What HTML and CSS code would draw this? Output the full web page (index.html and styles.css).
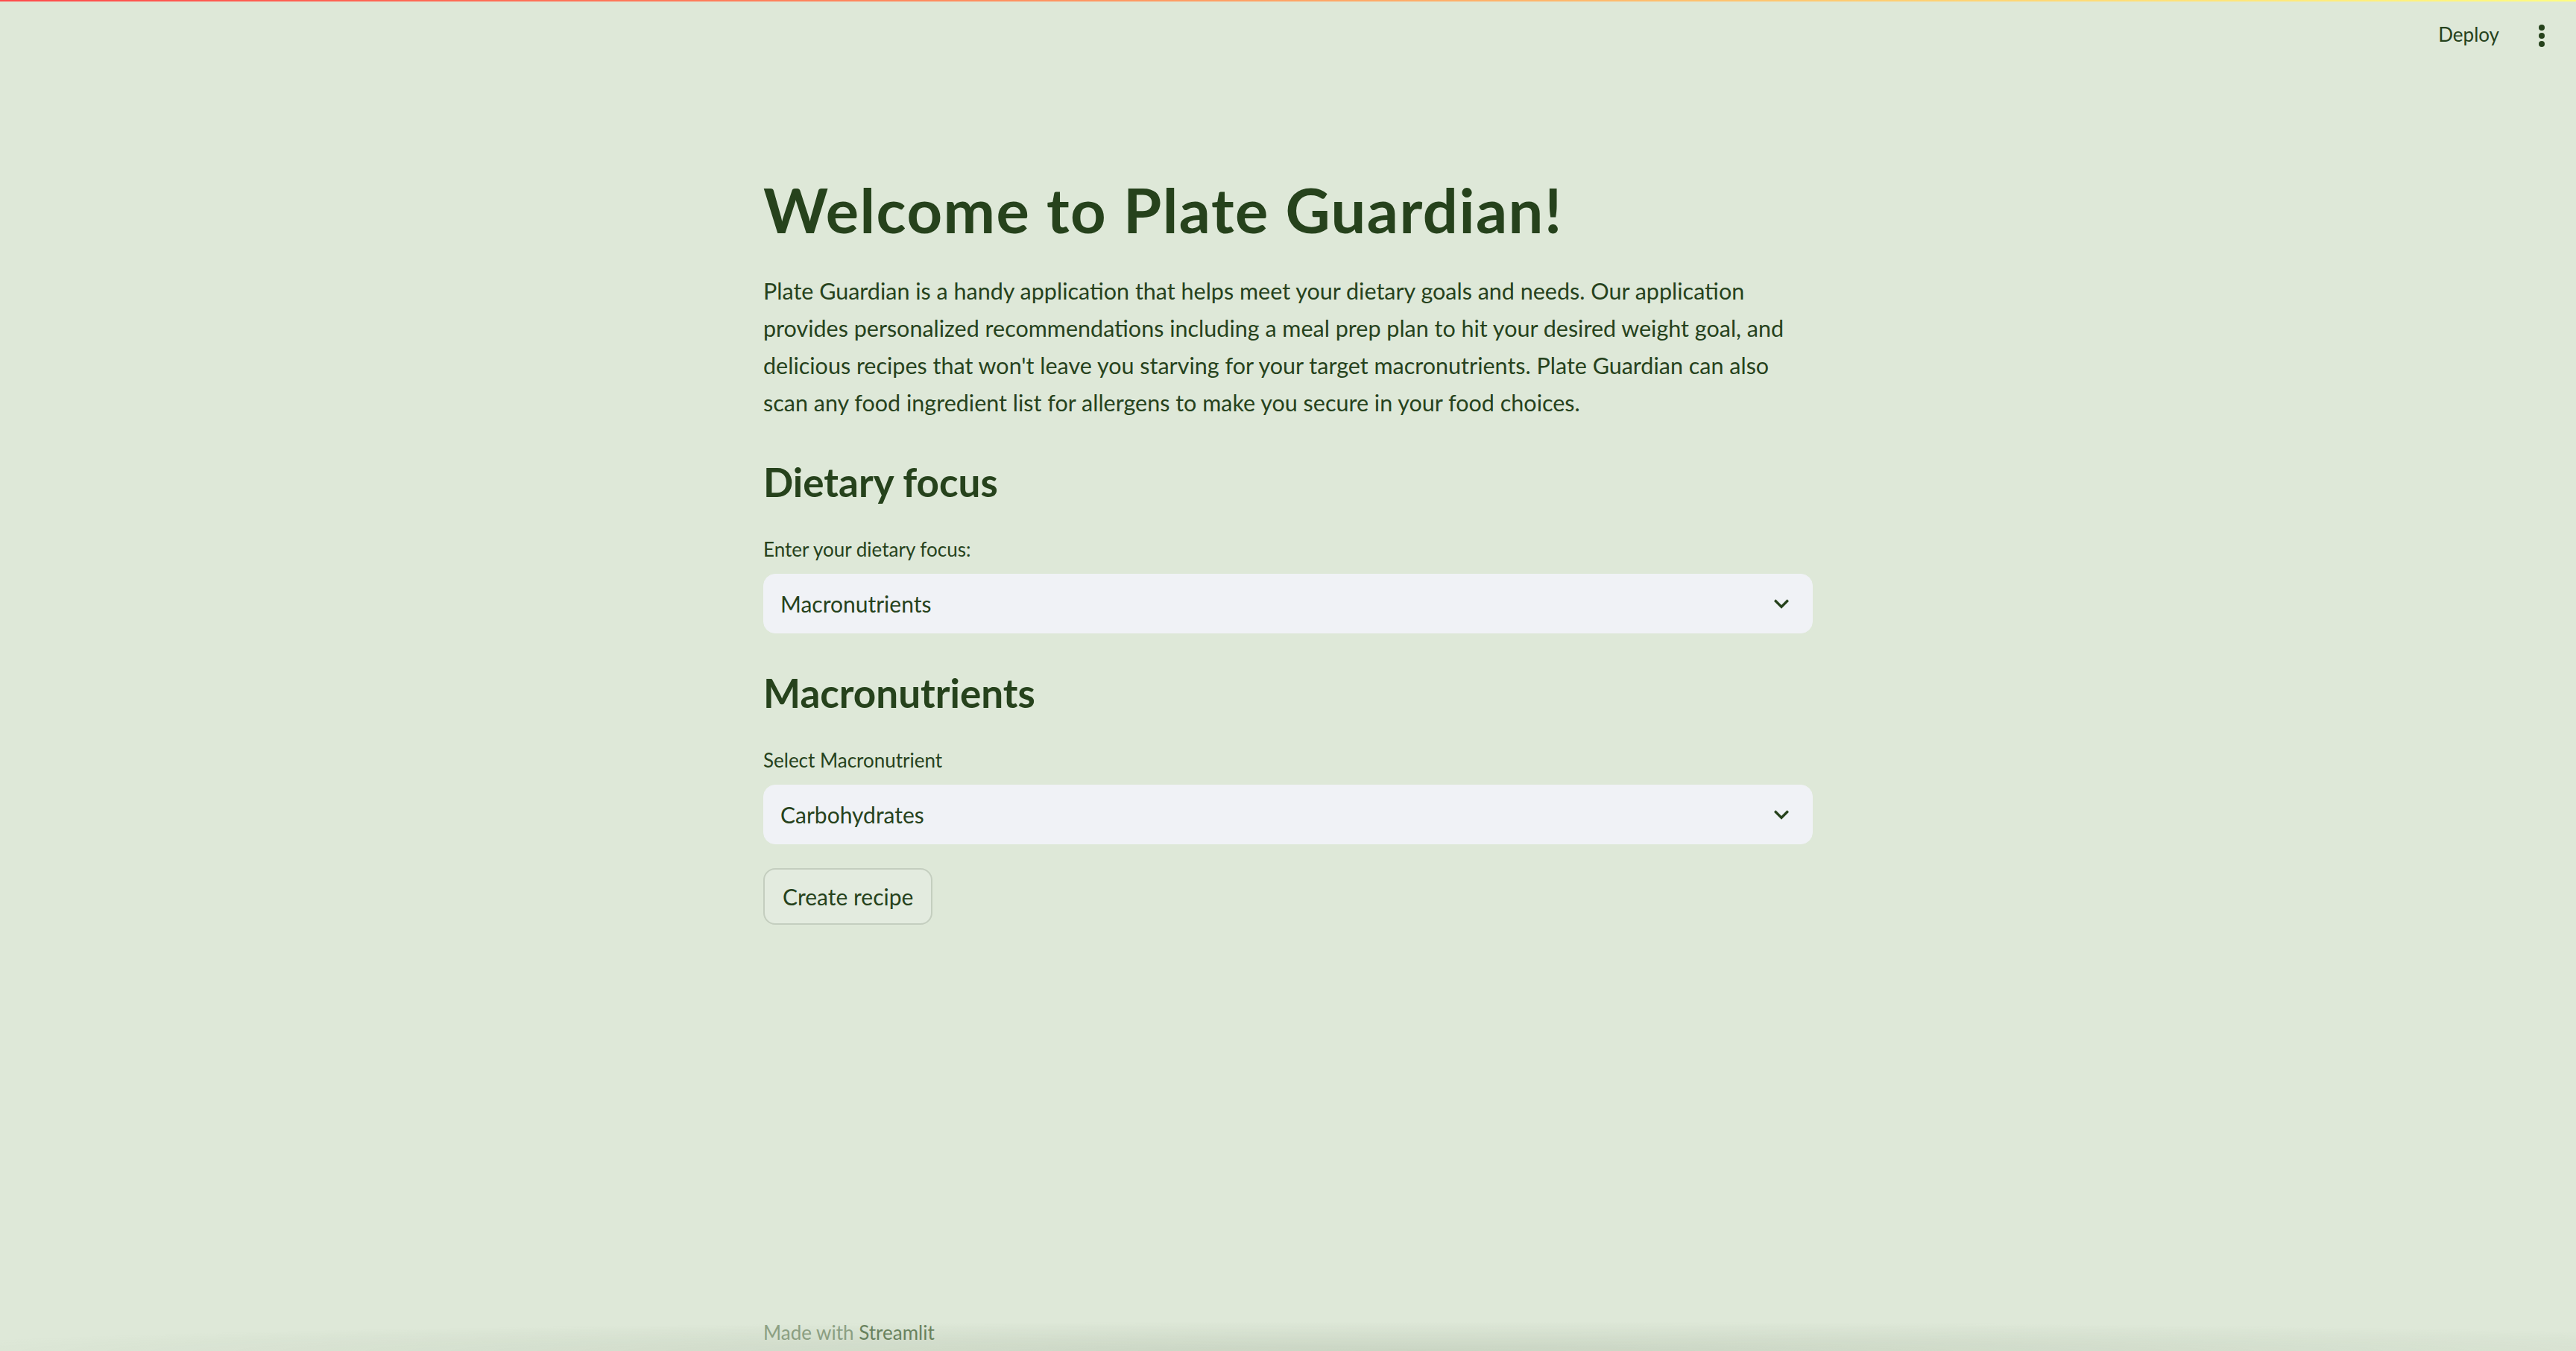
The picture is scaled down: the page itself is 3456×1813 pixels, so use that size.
FILE: index.html
```html
<!DOCTYPE html>
<html lang="en">
<head>
<meta charset="utf-8">
<title>Plate Guardian</title>
<link rel="stylesheet" href="styles.css">
</head>
<body>
<div class="decoration"></div>
<div class="app">
  <header class="toolbar">
    <span class="deploy">Deploy</span>
    <span class="menu" aria-label="Main menu">
      <span class="dot"></span><span class="dot"></span><span class="dot"></span>
    </span>
  </header>
  <main class="block">
    <h1 class="title">Welcome to Plate Guardian!</h1>
    <p class="intro">Plate Guardian is a handy application that helps meet your dietary goals and needs. Our application provides personalized recommendations including a meal prep plan to hit your desired weight goal, and delicious recipes that won't leave you starving for your target macronutrients. Plate Guardian can also scan any food ingredient list for allergens to make you secure in your food choices.</p>
    <h2 class="section">Dietary focus</h2>
    <div class="field">
      <label class="label">Enter your dietary focus:</label>
      <div class="select">
        <span class="value">Macronutrients</span>
        <svg class="chev" viewBox="0 0 24 24" width="40" height="40"><path d="M16.59 8.59L12 13.17 7.41 8.59 6 10l6 6 6-6z" fill="currentColor"/></svg>
      </div>
    </div>
    <h2 class="section section-2">Macronutrients</h2>
    <div class="field">
      <label class="label">Select Macronutrient</label>
      <div class="select">
        <span class="value">Carbohydrates</span>
        <svg class="chev" viewBox="0 0 24 24" width="40" height="40"><path d="M16.59 8.59L12 13.17 7.41 8.59 6 10l6 6 6-6z" fill="currentColor"/></svg>
      </div>
    </div>
    <div class="actions">
      <button class="btn" type="button">Create recipe</button>
    </div>
  </main>
  <footer class="footer">Made with <span class="brand">Streamlit</span></footer>
</div>
</body>
</html>
```
FILE: styles.css
```css
html, body {
  margin: 0;
  padding: 0;
}
body {
  background: #dee8d8;
  color: #26421c;
  font-family: Lato, "Source Sans Pro", "Noto Sans", sans-serif;
  overflow: hidden;
}
body::after {
  content: "";
  position: fixed;
  left: 0;
  right: 0;
  bottom: 0;
  height: 40px;
  background: radial-gradient(ellipse 60% 100% at 55% 100%, rgba(80, 100, 70, 0.14), rgba(80, 100, 70, 0) 100%);
  pointer-events: none;
}
.decoration {
  height: 2px;
  background: linear-gradient(90deg, rgb(255, 75, 75), rgb(255, 253, 128));
}
.app {
  min-height: calc(100vh - 2px);
  display: flex;
  flex-direction: column;
}
.toolbar {
  height: 100px;
  display: flex;
  justify-content: flex-end;
  align-items: flex-start;
  padding: 26px 0 0 0;
  box-sizing: border-box;
}
.deploy {
  font-size: 26px;
  line-height: 36px;
  color: #26421c;
}
.menu {
  display: flex;
  flex-direction: column;
  align-items: center;
  gap: 3px;
  width: 20px;
  margin: 5px 36px 0 47px;
}
.dot {
  width: 8px;
  height: 8px;
  border-radius: 50%;
  background: #26421c;
}
.block {
  width: 1408px;
  margin: 0 auto;
  padding-top: 129px;
}
.title {
  margin: 0;
  font-size: 83px;
  line-height: 100px;
  font-weight: 700;
  letter-spacing: 1.5px;
}
.intro {
  margin: 34px 0 0 0;
  font-size: 30.5px;
  line-height: 50px;
}
.section {
  margin: 47px 0 0 0;
  font-size: 53px;
  line-height: 70px;
  font-weight: 700;
}
.section-2 {
  margin-top: 45px;
}
.field {
  margin-top: 37px;
  display: flex;
  flex-direction: column;
}
.label {
  font-size: 26px;
  line-height: 36px;
}
.select {
  margin-top: 15px;
  height: 80px;
  box-sizing: border-box;
  background: #f0f2f6;
  border: 1px solid #f0f2f6;
  border-radius: 16px;
  display: flex;
  align-items: center;
  justify-content: space-between;
  padding: 0 21px 0 22px;
}
.value {
  font-size: 30px;
  line-height: 40px;
}
.chev {
  display: block;
  color: #26421c;
}
.actions {
  margin-top: 32px;
}
.btn {
  font-family: inherit;
  font-size: 30px;
  line-height: 40px;
  color: #26421c;
  background: #e3ebdf;
  border: 2px solid #c4cebf;
  border-radius: 16px;
  height: 76px;
  padding: 0 24px;
  cursor: pointer;
}
.footer {
  margin-top: auto;
  width: 1408px;
  margin-left: auto;
  margin-right: auto;
  font-size: 26px;
  line-height: 36px;
  padding-bottom: 7px;
  color: #8ea285;
}
.brand {
  color: #6b845f;
}
```
